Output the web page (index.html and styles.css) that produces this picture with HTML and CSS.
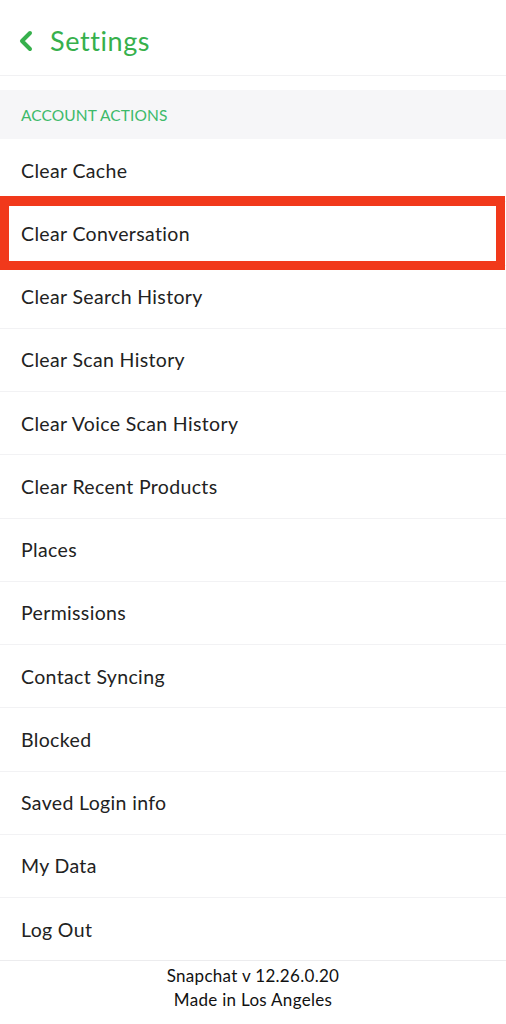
FILE: index.html
```html
<!DOCTYPE html>
<html lang="en">
<head>
  <meta charset="UTF-8">
  <title>Settings</title>
  <link rel="stylesheet" href="styles.css">
</head>
<body>

  <!-- Header -->
  <div class="header">
    <svg class="back" width="16" height="24" viewBox="0 0 16 24">
      <path d="M12 4 L4 12 L12 20" fill="none" stroke="#36b04c" stroke-width="4" stroke-linecap="round" stroke-linejoin="round"/>
    </svg>
    <h1>Settings</h1>
  </div>

  <div class="section">ACCOUNT ACTIONS</div>

  <div class="list">
    <div class="row">Clear Cache</div>
    <div class="row marked">Clear Conversation<span class="mark"></span></div>
    <div class="row">Clear Search History</div>
    <div class="row">Clear Scan History</div>
    <div class="row">Clear Voice Scan History</div>
    <div class="row">Clear Recent Products</div>
    <div class="row">Places</div>
    <div class="row">Permissions</div>
    <div class="row">Contact Syncing</div>
    <div class="row">Blocked</div>
    <div class="row">Saved Login info</div>
    <div class="row">My Data</div>
    <div class="row">Log Out</div>
  </div>

  <div class="footer">
    Snapchat v 12.26.0.20<br>
    Made in Los Angeles
  </div>

</body>
</html>
```

FILE: styles.css
```css
* { margin: 0; padding: 0; box-sizing: border-box; }

body {
  background: #fff;
  font-family: 'Lato', 'Noto Sans', sans-serif;
  color: #222;
  width: 506px;
}

.header {
  height: 76px;
  display: flex;
  align-items: center;
  padding-left: 18px;
  padding-top: 6px;
  border-bottom: 1px solid #f1f1f3;
}

.back { margin-right: 16px; }

.header h1 {
  font-size: 27px;
  font-weight: 400;
  color: #36b04c;
  letter-spacing: 0.6px;
}

.section {
  margin-top: 14px;
  height: 49px;
  background: #f6f6f8;
  padding-left: 21px;
  display: flex;
  align-items: center;
  font-size: 15.5px;
  color: #3dba6a;
  letter-spacing: 0.1px;
}

.row {
  height: 63.25px;
  display: flex;
  align-items: center;
  padding-left: 21px;
  font-size: 19.5px;
  border-bottom: 1px solid #f2f2f4;
  letter-spacing: 0.35px;
}

.row:last-child { border-bottom: 1px solid #ececee; }

.marked { position: relative; }

.mark {
  position: absolute;
  top: -6px;
  bottom: -5px;
  left: 0;
  right: 1px;
  border: 9px solid #f1391b;
  border-top-width: 10px;
}

.footer {
  text-align: center;
  font-size: 17px;
  line-height: 24px;
  padding-top: 3px;
  color: #111;
  letter-spacing: 0.3px;
}
```
